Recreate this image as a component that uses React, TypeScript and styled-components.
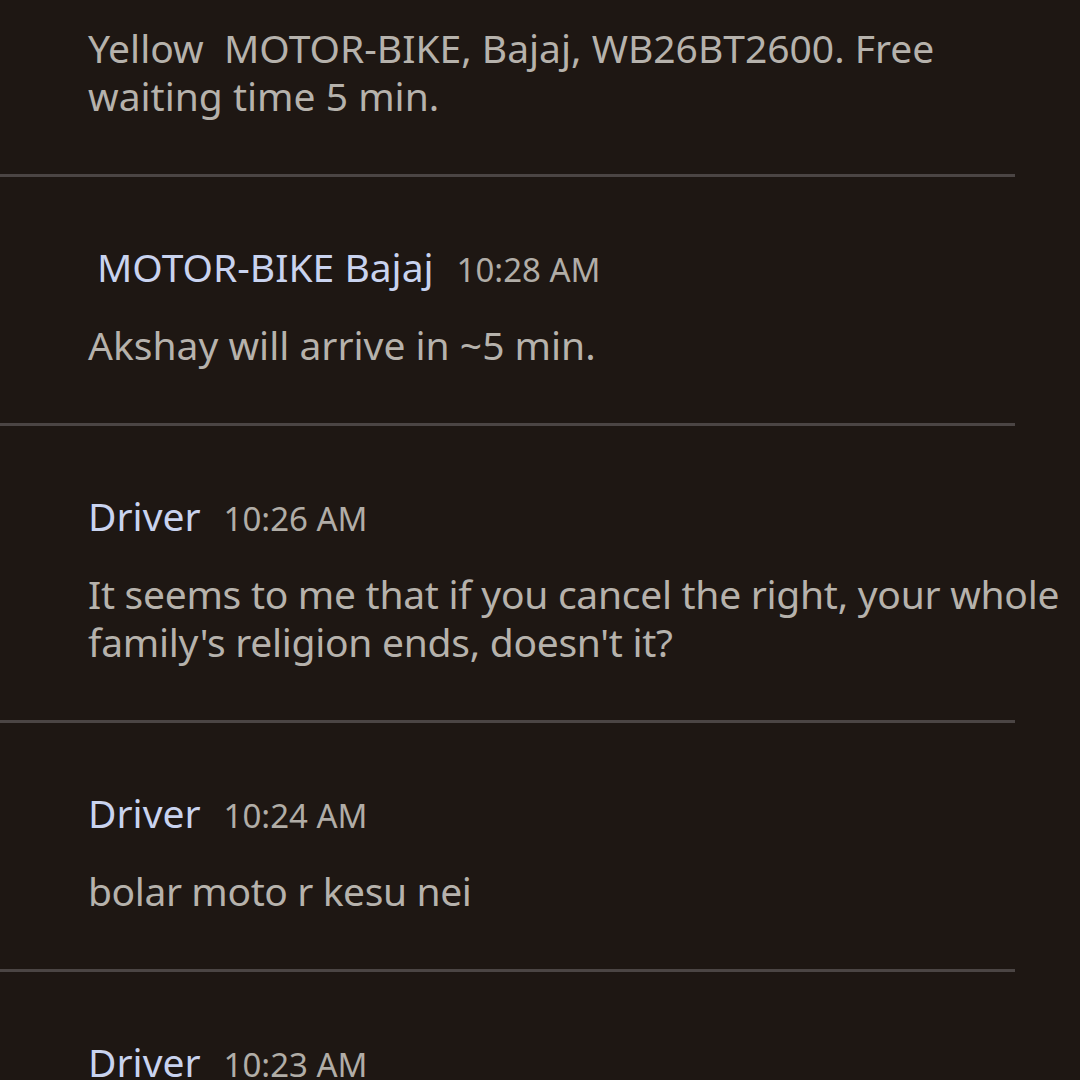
import React from "react";
import styled, { createGlobalStyle } from "styled-components";

const Global = createGlobalStyle`
  html, body { margin: 0; padding: 0; background: #1e1713; }
  body { font-family: "Noto Sans", "Open Sans", sans-serif; }
`;

const Screen = styled.div`
  width: 1080px;
  height: 1080px;
  overflow: hidden;
  background: #1e1713;
  display: flex;
  flex-direction: column;
`;

const Message = styled.section<{ $first?: boolean }>`
  display: flex;
  flex-direction: column;
  padding: ${(p) => (p.$first ? "24px" : "66px")} 0 54px 88px;
`;

const Header = styled.div<{ $indent?: number }>`
  display: flex;
  align-items: baseline;
  gap: 23px;
  height: 48px;
  line-height: 48px;
  padding-left: ${(p) => p.$indent ?? 0}px;
  margin-bottom: 30px;
`;

const Name = styled.span`
  color: #c9d3ef;
  font-size: 39px;
`;

const Time = styled.span`
  color: #b1ada7;
  font-size: 33px;
`;

const Body = styled.p<{ $tracking?: number }>`
  margin: 0;
  color: #b6b2ac;
  font-size: 39px;
  line-height: 48px;
  white-space: pre-wrap;
  letter-spacing: ${(p) => p.$tracking ?? 0}px;
`;

const Divider = styled.hr`
  margin: 0;
  border: none;
  height: 3px;
  width: 1015px;
  background: #4b4544;
  flex-shrink: 0;
`;

type Msg = { name?: string; time?: string; text?: string; indent?: number; tracking?: number };

const messages: Msg[] = [
  { text: "Yellow  MOTOR-BIKE, Bajaj, WB26BT2600. Free\nwaiting time 5 min." },
  { name: "MOTOR-BIKE Bajaj", time: "10:28 AM", text: "Akshay will arrive in ~5 min.", indent: 9 },
  {
    name: "Driver",
    time: "10:26 AM",
    text: "It seems to me that if you cancel the right, your whole\nfamily's religion ends, doesn't it?",
    tracking: -0.28,
  },
  { name: "Driver", time: "10:24 AM", text: "bolar moto r kesu nei", tracking: -0.4 },
  { name: "Driver", time: "10:23 AM" },
];

export default function App() {
  return (
    <Screen>
      <Global />
      {messages.map((m, i) => (
        <React.Fragment key={i}>
          <Message $first={i === 0}>
            {m.name && (
              <Header $indent={m.indent}>
                <Name>{m.name}</Name>
                <Time>{m.time}</Time>
              </Header>
            )}
            {m.text && <Body $tracking={m.tracking}>{m.text}</Body>}
          </Message>
          {i < messages.length - 1 && <Divider />}
        </React.Fragment>
      ))}
    </Screen>
  );
}
